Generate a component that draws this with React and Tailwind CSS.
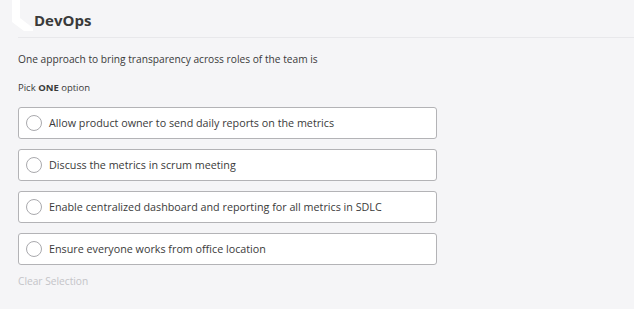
const options = [
  "Allow product owner to send daily reports on the metrics",
  "Discuss the metrics in scrum meeting",
  "Enable centralized dashboard and reporting for all metrics in SDLC",
  "Ensure everyone works from office location",
];

export default function App() {
  return (
    <div
      className="relative h-[309px] w-[634px] overflow-hidden bg-[#f5f5f7] text-[#333]"
      style={{ fontFamily: '"Open Sans", "Noto Sans", sans-serif' }}
    >
      <svg className="absolute left-0 top-0" width="40" height="34" viewBox="0 0 40 34">
        <polygon points="12,0 20,0 20,18 33,28 33,31 24,31 12,22" fill="#ffffff" />
      </svg>
      <div className="relative flex h-[37px] items-center pl-[34px] pt-[3px] text-[15px] font-bold text-[#3a3a3a]">
        DevOps
      </div>
      <div className="ml-[18px] border-t border-[#e8e8eb]" />
      <div className="pl-[18px] pr-[197px]">
        <p className="mt-[14px] text-[10.2px] leading-[14px] text-[#3a3a3a]">
          One approach to bring transparency across roles of the team is
        </p>
        <p className="mt-[16px] text-[9.5px] leading-[12px] text-[#3a3a3a]">
          Pick <span className="font-bold">ONE</span> option
        </p>
        <div className="mt-[13px] flex flex-col gap-[10px]">
          {options.map((o) => (
            <div
              key={o}
              className="flex h-[32px] items-center gap-[7px] rounded-[3px] border border-[#b3b3b6] bg-white pl-[7px]"
            >
              <span className="h-[16px] w-[16px] shrink-0 rounded-full border border-[#a9a9ad] bg-white" />
              <span className="text-[10.75px] text-[#3a3a3a]">{o}</span>
            </div>
          ))}
        </div>
        <p className="mt-[9px] text-[10.2px] text-[#c4c4c8]">Clear Selection</p>
      </div>
    </div>
  );
}
